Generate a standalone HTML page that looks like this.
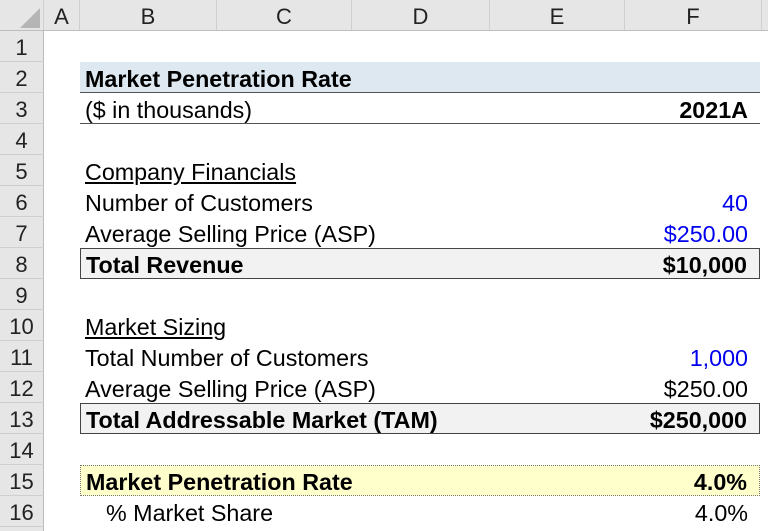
<!DOCTYPE html>
<html><head><style>
html,body{margin:0;width:768px;height:531px;overflow:hidden}
body{background:#fff;font-family:"Liberation Sans",Arial,sans-serif;position:relative}
.hdr{position:absolute;top:0;left:0;width:768px;height:31px;background:#e6e6e6;border-bottom:1px solid #bdbdbd;box-sizing:border-box}
.ch{position:absolute;top:0;height:30px;line-height:33px;text-align:center;font-size:22px;color:#222;border-right:1px solid #cfcfcf;box-sizing:border-box}
.rh{position:absolute;left:0;width:44px;height:31px;background:#e6e6e6;border-bottom:1px solid #cfcfcf;border-right:1px solid #bdbdbd;box-sizing:border-box;text-align:center;line-height:34px;font-size:22px;color:#222}
.c{position:absolute;left:80px;width:680px;height:31px;line-height:34px;font-size:23.3px;color:#000;box-sizing:border-box}
.l{position:absolute;left:5px}
.r{position:absolute;right:12px}
.b{font-weight:bold}
.blue{color:#0000ee}
</style></head><body>
<div class="hdr"></div>
<svg style="position:absolute;left:18px;top:8px" width="22" height="20"><polygon points="22,0 22,20 2,20" fill="#b5b5b5"/></svg>
<div class="ch" style="left:0;width:44px"></div>
<div class="ch" style="left:44px;width:36px">A</div>
<div class="ch" style="left:80px;width:137px">B</div>
<div class="ch" style="left:217px;width:135px">C</div>
<div class="ch" style="left:352px;width:138px">D</div>
<div class="ch" style="left:490px;width:135px">E</div>
<div class="ch" style="left:625px;width:137px">F</div>
<div class="rh" style="top:31px">1</div><div class="rh" style="top:62px">2</div><div class="rh" style="top:93px">3</div><div class="rh" style="top:124px">4</div><div class="rh" style="top:155px">5</div><div class="rh" style="top:186px">6</div><div class="rh" style="top:217px">7</div><div class="rh" style="top:248px">8</div><div class="rh" style="top:279px">9</div><div class="rh" style="top:310px">10</div><div class="rh" style="top:341px">11</div><div class="rh" style="top:372px">12</div><div class="rh" style="top:403px">13</div><div class="rh" style="top:434px">14</div><div class="rh" style="top:465px">15</div><div class="rh" style="top:496px">16</div><div class="rh" style="top:527px;height:4px;border-bottom:none"></div>

<div class="c b" style="top:62px;background:#dde8f1;border-bottom:1px solid #555"><span class="l">Market Penetration Rate</span></div>
<div class="c" style="top:93px;border-bottom:1px solid #555"><span class="l">($ in thousands)</span><span class="r b">2021A</span></div>
<div class="c" style="top:155px"><span class="l" style="text-decoration:underline">Company Financials</span></div>
<div class="c" style="top:186px"><span class="l">Number of Customers</span><span class="r blue">40</span></div>
<div class="c" style="top:217px"><span class="l">Average Selling Price (ASP)</span><span class="r blue">$250.00</span></div>
<div class="c b" style="top:248px;background:#f2f2f2;border:1px solid #444;line-height:32px"><span class="l">Total Revenue</span><span class="r">$10,000</span></div>
<div class="c" style="top:310px"><span class="l" style="text-decoration:underline">Market Sizing</span></div>
<div class="c" style="top:341px"><span class="l">Total Number of Customers</span><span class="r blue">1,000</span></div>
<div class="c" style="top:372px"><span class="l">Average Selling Price (ASP)</span><span class="r">$250.00</span></div>
<div class="c b" style="top:403px;background:#f2f2f2;border:1px solid #444;line-height:32px"><span class="l">Total Addressable Market (TAM)</span><span class="r">$250,000</span></div>
<div class="c b" style="top:465px;background:#ffffcc;border:1px dotted #777;line-height:32px"><span class="l">Market Penetration Rate</span><span class="r">4.0%</span></div>
<div class="c" style="top:496px;height:31px"><span class="l" style="left:26px">% Market Share</span><span class="r">4.0%</span></div>
</body></html>
